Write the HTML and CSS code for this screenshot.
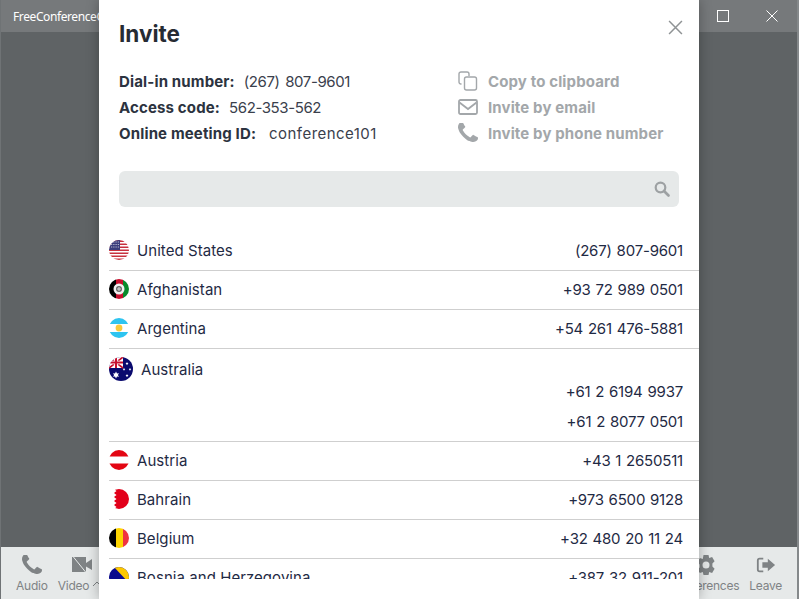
FILE: index.html
```html
<!DOCTYPE html>
<html lang="en">
<head>
<meta charset="utf-8">
<title>FreeConferenceCall</title>
<link rel="stylesheet" href="styles.css">
</head>
<body>
<div class="app">
  <header class="titlebar">
    <span class="app-name">FreeConferenceCall</span>
    <div class="win-controls">
      <svg class="win-icon" viewBox="0 0 12 12"><rect x=".5" y=".5" width="11" height="11" fill="none" stroke="#fff" stroke-width="1"/></svg>
      <svg class="win-icon" viewBox="0 0 12 12"><path d="M.5 .5l11 11M11.500 .5l-11 11" stroke="#fff" stroke-width="1" fill="none"/></svg>
    </div>
  </header>
  <main class="stage"></main>
  <footer class="toolbar">
    <div class="tool-group">
      <div class="tool">
        <svg class="tool-icon" viewBox="192 192 1408 1408"><path fill="#7f8385" d="M1600 1240q0 27-10 70.5t-21 68.5q-21 50-122 106-94 51-186 51-27 0-53-3.5t-57.5-12.5-47-14.5-55.5-20.5-49-18q-98-35-175-83-127-79-264-216t-216-264q-48-77-83-175-3-9-18-49t-20.5-55.5-14.5-47-12.5-57.5-3.5-53q0-92 51-186 56-101 106-122 25-11 68.5-21t70.5-10q14 0 21 3 18 6 53 76 11 19 30 54t35 63.5 31 53.5q3 4 17.5 25t21.5 35.5 7 28.5q0 20-28.5 50t-62 55-62 53-28.5 46q0 9 5 22.5t8.5 20.5 14 24 11.5 19q76 137 174 235t235 174q2 1 19 11.5t24 14 20.5 8.5 22.5 5q18 0 46-28.5t53-62 55-62 50-28.5q14 0 28.5 7t35.5 21.5 25 17.5q25 15 53.5 31t63.5 35 54 30q70 35 76 53 3 7 3 21z"/></svg>
        <span>Audio</span>
      </div>
      <div class="tool tool-video">
        <svg class="tool-icon video-icon" viewBox="0 0 20 20"><path fill="#7f8385" d="M0 2h14v15H0zM14 8l6-4v11l-6-3.500z"/><path d="M-1 -1L16 20" stroke="#e6e9e9" stroke-width="1"/></svg>
        <span>Video</span>
        <svg class="caret" viewBox="0 0 10 6"><path d="M1 5l4-4 4 4" fill="none" stroke="#7f8385" stroke-width="1"/></svg>
      </div>
    </div>
    <div class="tool-group tool-group-end">
      <div class="tool">
        <svg class="tool-icon" viewBox="0 0 20 20"><path fill="#7f8385" fill-rule="evenodd" d="M7.500 0h5l.7 3 2.900-1 2.500 4.300-2.200 2.200v3l2.200 2.200-2.500 4.300-2.900-1-.7 3h-5l-.7-3-2.900 1L1.400 14.700l2.200-2.200v-3L1.400 7.300 3.900 3l2.900 1zM10 6.500a3.500 3.500 0 100 7 3.500 3.500 0 000-7z"/></svg>
        <span>Preferences</span>
      </div>
      <div class="tool">
        <svg class="tool-icon" viewBox="0 0 22 20"><path fill="none" stroke="#7f8385" stroke-width="2" d="M8 3H4a2 2 0 00-2 2v10a2 2 0 002 2h4"/><path fill="#7f8385" d="M7 7h6V3l8 7-8 7v-4H7z"/></svg>
        <span>Leave</span>
      </div>
    </div>
  </footer>

  <section class="modal">
    <h1 class="modal-title">Invite</h1>
    <svg class="modal-close" viewBox="0 0 14 14"><path d="M1 1l12 12M13 1L1 13" stroke="#8f9395" stroke-width="1.400" fill="none"/></svg>
    <div class="details">
      <div class="info">
        <p class="info-row"><b>Dial-in number:</b><span class="digits">(267) 807-9601</span></p>
        <p class="info-row"><b>Access code:</b><span class="digits">562-353-562</span></p>
        <p class="info-row"><b>Online meeting ID:</b><span class="word">conference101</span></p>
      </div>
      <div class="actions">
        <p class="action">
          <svg class="action-icon" viewBox="0 0 20 20"><path fill="none" stroke="#a3a7aa" stroke-width="1.400" d="M3.500 13H3a2 2 0 01-2-2V3a2 2 0 012-2h6a2 2 0 012 2v2"/><rect x="6.500" y="6" width="12" height="13" rx="2" fill="none" stroke="#a3a7aa" stroke-width="1.400"/></svg>
          <span>Copy to clipboard</span>
        </p>
        <p class="action">
          <svg class="action-icon" viewBox="0 0 20 16"><rect x="1" y="1" width="18" height="14" rx="1.500" fill="none" stroke="#a3a7aa" stroke-width="1.800"/><path d="M1.500 3.500L10 10l8.500-6.500" fill="none" stroke="#a3a7aa" stroke-width="1.800"/></svg>
          <span>Invite by email</span>
        </p>
        <p class="action">
          <svg class="action-icon" viewBox="192 192 1408 1408"><path fill="#a3a7aa" d="M1600 1240q0 27-10 70.5t-21 68.5q-21 50-122 106-94 51-186 51-27 0-53-3.5t-57.5-12.5-47-14.5-55.5-20.5-49-18q-98-35-175-83-127-79-264-216t-216-264q-48-77-83-175-3-9-18-49t-20.5-55.5-14.5-47-12.5-57.5-3.5-53q0-92 51-186 56-101 106-122 25-11 68.5-21t70.5-10q14 0 21 3 18 6 53 76 11 19 30 54t35 63.5 31 53.5q3 4 17.5 25t21.5 35.5 7 28.5q0 20-28.5 50t-62 55-62 53-28.5 46q0 9 5 22.5t8.5 20.5 14 24 11.5 19q76 137 174 235t235 174q2 1 19 11.5t24 14 20.5 8.5 22.5 5q18 0 46-28.5t53-62 55-62 50-28.5q14 0 28.5 7t35.5 21.5 25 17.5q25 15 53.5 31t63.5 35 54 30q70 35 76 53 3 7 3 21z"/></svg>
          <span>Invite by phone number</span>
        </p>
      </div>
    </div>
    <div class="search">
      <svg class="search-icon" viewBox="0 0 16 16"><circle cx="6.500" cy="6.500" r="4.800" fill="none" stroke="#9da1a3" stroke-width="2.200"/><path d="M10 10l4.500 4.500" stroke="#9da1a3" stroke-width="2.600" stroke-linecap="round"/></svg>
    </div>
    <div class="countries">
      <div class="country">
        <svg class="flag" viewBox="0 0 20 20"><clipPath id="c1"><circle cx="10" cy="10" r="10"/></clipPath><g clip-path="url(#c1)"><rect width="20" height="20" fill="#fff"/><path fill="#c8313e" d="M0 0h20v2H0zM0 3.500h20v1.500H0zM0 6.500h20V8H0zM0 9.500h20V11H0zM0 12.500h20V14H0zM0 15.500h20V17H0zM0 18.500h20V20H0z"/><rect width="11" height="10" fill="#3a3d7c"/><path stroke="#fff" stroke-width=".8" stroke-dasharray="1 1.200" d="M0 2h11M0 4.500h11M0 7h11"/></g></svg>
        <span class="country-name">United States</span>
        <span class="country-num">(267) 807-9601</span>
      </div>
      <div class="country">
        <svg class="flag" viewBox="0 0 20 20"><clipPath id="c2"><circle cx="10" cy="10" r="10"/></clipPath><g clip-path="url(#c2)"><rect width="7" height="20" fill="#000"/><rect x="7" width="7" height="20" fill="#c8102e"/><rect x="14" width="6" height="20" fill="#078a2b"/><circle cx="10" cy="10" r="5.500" fill="#f0f0f0"/><circle cx="10" cy="10" r="3" fill="#666"/><path d="M8 10h4M10 8v4" stroke="#ddd" stroke-width="1"/></g></svg>
        <span class="country-name">Afghanistan</span>
        <span class="country-num">+93 72 989 0501</span>
      </div>
      <div class="country">
        <svg class="flag" viewBox="0 0 20 20"><clipPath id="c3"><circle cx="10" cy="10" r="10"/></clipPath><g clip-path="url(#c3)"><rect width="20" height="20" fill="#fff"/><rect width="20" height="6" fill="#2ec4f0"/><rect y="14" width="20" height="6" fill="#2ec4f0"/><circle cx="10" cy="10" r="3.400" fill="#f6c93c"/></g></svg>
        <span class="country-name">Argentina</span>
        <span class="country-num">+54 261 476-5881</span>
      </div>
      <div class="country country-multi">
        <div class="country-head">
          <svg class="flag flag-lg" viewBox="0 0 24 24"><clipPath id="c4"><circle cx="12" cy="12" r="12"/></clipPath><g clip-path="url(#c4)"><rect width="24" height="24" fill="#0a0a6e"/><rect width="14" height="11" fill="#fff"/><path d="M0 0l14 11M14 0L0 11" stroke="#c8102e" stroke-width="1.600"/><path d="M7 0v11M0 5.500h14" stroke="#fff" stroke-width="3.400"/><path d="M7 0v11M0 5.500h14" stroke="#c8102e" stroke-width="2"/><path fill="#fff" d="M7 14.500l1 2 2-.2-1.100 1.700 1.100 1.700-2-.2-1 2-1-2-2 .2 1.100-1.700-1.100-1.700 2 .2zM18 5l.5 1 1 .1-.7.7.2 1-1-.5-1 .5.2-1-.7-.7 1-.1zM21 11l.4.8.9.1-.6.6.1.9-.8-.4-.8.4.1-.9-.6-.6.9-.1zM15 11l.4.8.9.1-.6.6.1.9-.8-.4-.8.4.1-.9-.6-.6.9-.1zM18 17l.5 1 1 .1-.7.7.2 1-1-.5-1 .5.2-1-.7-.7 1-.1z"/></g></svg>
          <span class="country-name">Australia</span>
        </div>
        <span class="country-num">+61 2 6194 9937</span>
        <span class="country-num">+61 2 8077 0501</span>
      </div>
      <div class="country">
        <svg class="flag" viewBox="0 0 20 20"><clipPath id="c5"><circle cx="10" cy="10" r="10"/></clipPath><g clip-path="url(#c5)"><rect width="20" height="20" fill="#fff"/><rect width="20" height="6.500" fill="#e30613"/><rect y="13.500" width="20" height="6.500" fill="#e30613"/></g></svg>
        <span class="country-name">Austria</span>
        <span class="country-num">+43 1 2650511</span>
      </div>
      <div class="country">
        <svg class="flag" viewBox="0 0 20 20"><clipPath id="c6"><circle cx="10" cy="10" r="10"/></clipPath><g clip-path="url(#c6)"><rect width="20" height="20" fill="#fff"/><path fill="#e2001a" d="M20 0H5l2.500 2-2.500 2 2.500 2-2.500 2 2.500 2-2.500 2 2.500 2-2.500 2 2.500 2-2.500 2h15z"/></g></svg>
        <span class="country-name">Bahrain</span>
        <span class="country-num">+973 6500 9128</span>
      </div>
      <div class="country">
        <svg class="flag" viewBox="0 0 20 20"><clipPath id="c7"><circle cx="10" cy="10" r="10"/></clipPath><g clip-path="url(#c7)"><rect width="7" height="20" fill="#000"/><rect x="7" width="7" height="20" fill="#fdd400"/><rect x="14" width="6" height="20" fill="#ef3340"/></g></svg>
        <span class="country-name">Belgium</span>
        <span class="country-num">+32 480 20 11 24</span>
      </div>
      <div class="country">
        <svg class="flag" viewBox="0 0 20 20"><clipPath id="c8"><circle cx="10" cy="10" r="10"/></clipPath><g clip-path="url(#c8)"><rect width="20" height="20" fill="#0a0a8c"/><path fill="#fdc800" d="M5 0h15v16z"/></g></svg>
        <span class="country-name">Bosnia and Herzegovina</span>
        <span class="country-num">+387 32 911-201</span>
      </div>
    </div>
  </section>
</div>
</body>
</html>
```
FILE: styles.css
```css
* { box-sizing: border-box; }
html, body { margin: 0; height: 100%; overflow: hidden; }
body { font-family: Inter, "Liberation Sans", sans-serif; font-size: 15px; color: #2c3340; }
p, h1 { margin: 0; }

.app { position: relative; width: 799px; height: 599px; display: flex; flex-direction: column; background: #5f6365; border-left: 1px solid #6f7375; border-right: 2px solid #85898b; }
.titlebar { height: 32px; display: flex; align-items: center; justify-content: space-between; background: #76797b; color: #fff; font-family: "Noto Sans", sans-serif; font-size: 12px; letter-spacing: -.4px; padding-left: 12px; }
.win-controls { display: flex; gap: 37px; padding-right: 19px; }
.win-icon { width: 12px; height: 12px; display: block; }
.stage { flex: 1; }
.toolbar { height: 52px; display: flex; justify-content: space-between; background: #e6e9e9; color: #7f8385; font-size: 12px; letter-spacing: -.25px; padding: 8px 15px 0 15px; }
.tool-group { display: flex; gap: 8px; }
.tool-group-end { gap: 10px; }
.tool { position: relative; display: flex; flex-direction: column; align-items: center; gap: 2px; line-height: 17px; }
.tool-icon { width: 20px; height: 20px; display: block; }
.video-icon { margin-left: 16px; }
.caret { position: absolute; left: 36px; top: 26px; width: 10px; height: 6px; }

.modal { position: absolute; left: 98px; top: 0; width: 600px; height: 599px; background: #fff; box-shadow: 0 0 12px rgba(0, 0, 0, .3); display: flex; flex-direction: column; }
.modal-title { font-size: 22.5px; font-weight: 700; line-height: 32px; margin: 18px 0 0 20px; color: #262b33; }
.modal-close { position: absolute; left: 569px; top: 20px; width: 15px; height: 15px; }
.details { display: flex; justify-content: space-between; margin: 18px 0 0 20px; }
.info-row, .action { height: 26px; display: flex; align-items: center; }
.info-row b { font-weight: 700; letter-spacing: .15px; margin-right: 9px; }
.info-row span { color: #3a404c; }
.digits { letter-spacing: -.4px; word-spacing: 1.700px; }
.word { letter-spacing: .45px; margin-left: 4px; }
.actions { width: 241px; }
.action { font-weight: 700; letter-spacing: .13px; color: #a3a7aa; }
.action-icon { width: 20px; height: 20px; margin-right: 10px; display: block; }
.search { height: 36px; margin: 25px 20px 0; background: #e6e9e9; border-radius: 6px; display: flex; align-items: center; justify-content: flex-end; padding-right: 9px; }
.search-icon { width: 16px; height: 16px; }
.countries { margin: 25px 0 0 10px; height: 347px; overflow: hidden; color: #1f2a44; }
.country { height: 39px; display: flex; align-items: center; border-bottom: 1px solid #cfcfcf; padding: 0 16px 2px 0; }
.flag { width: 20px; height: 20px; flex: none; margin-right: 8px; }
.flag-lg { width: 24px; height: 24px; }
.country-name { flex: 1; letter-spacing: .06px; }
.country-num { letter-spacing: -.2px; word-spacing: .8px; }
.country-multi { height: 93px; flex-direction: column; align-items: stretch; padding: 8px 16px 0 0; }
.country-head { display: flex; align-items: center; height: 24px; margin-bottom: -4px; }
.country-multi .country-num { display: block; text-align: right; height: 30px; line-height: 30px; }
```
